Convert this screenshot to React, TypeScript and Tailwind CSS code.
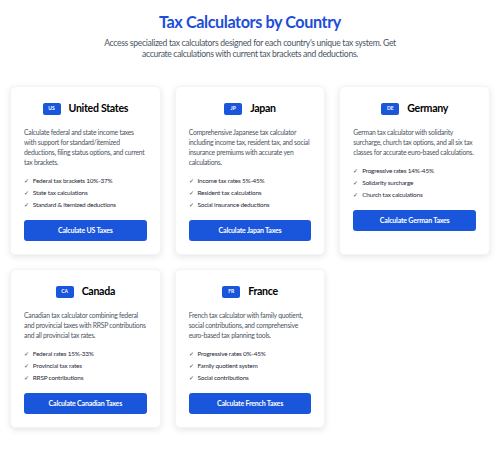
import { ReactNode } from "react";

// Country card data
interface Country {
    code: string;
    name: string;
    description: string;
    features: string[];
    button: string;
}

const countries: Country[] = [
    {
        code: "US",
        name: "United States",
        description:
            "Calculate federal and state income taxes with support for standard/itemized deductions, filing status options, and current tax brackets.",
        features: ["Federal tax brackets 10%-37%", "State tax calculations", "Standard & itemized deductions"],
        button: "Calculate US Taxes",
    },
    {
        code: "JP",
        name: "Japan",
        description:
            "Comprehensive Japanese tax calculator including income tax, resident tax, and social insurance premiums with accurate yen calculations.",
        features: ["Income tax rates 5%-45%", "Resident tax calculations", "Social insurance deductions"],
        button: "Calculate Japan Taxes",
    },
    {
        code: "DE",
        name: "Germany",
        description:
            "German tax calculator with solidarity surcharge, church tax options, and all six tax classes for accurate euro-based calculations.",
        features: ["Progressive rates 14%-45%", "Solidarity surcharge", "Church tax calculations"],
        button: "Calculate German Taxes",
    },
    {
        code: "CA",
        name: "Canada",
        description:
            "Canadian tax calculator combining federal and provincial taxes with RRSP contributions and all provincial tax rates.",
        features: ["Federal rates 15%-33%", "Provincial tax rates", "RRSP contributions"],
        button: "Calculate Canadian Taxes",
    },
    {
        code: "FR",
        name: "France",
        description:
            "French tax calculator with family quotient, social contributions, and comprehensive euro-based tax planning tools.",
        features: ["Progressive rates 0%-45%", "Family quotient system", "Social contributions"],
        button: "Calculate French Taxes",
    },
];

const CountryCard = ({ country }: { country: Country }) => (
    <div className="flex flex-col rounded-[5px] border border-gray-100 bg-white px-[13px] pt-[14px] pb-[13px] shadow-[0_2px_6px_rgba(0,0,0,0.1)]">
        <div className="flex h-[16px] items-center justify-center gap-[8px]">
            <span className="flex h-[12px] w-[18px] items-center justify-center rounded-[2px] bg-[#1a56db] text-[5px] font-bold text-white">
                {country.code}
            </span>
            <h2 className="text-[10.6px] font-bold tracking-[-0.3px] text-black">{country.name}</h2>
        </div>
        <p className="mt-[10px] text-[6.8px] leading-[10px] tracking-[-0.25px] text-[#4b5563]">
            {country.description}
        </p>
        <ul className="mt-[8px] flex flex-col">
            {country.features.map((f) => (
                <li
                    key={f}
                    className="flex h-[12px] items-center gap-[4px] text-[6.4px] tracking-[-0.2px] text-[#1f2937]"
                >
                    <span className="text-[#374151]">✓</span>
                    {f}
                </li>
            ))}
        </ul>
        <button className="mt-[9px] h-[21px] w-full rounded-[3px] bg-[#1a56db] text-[7px] font-bold tracking-[-0.2px] text-white">
            {country.button}
        </button>
    </div>
);

const Page = ({ children }: { children: ReactNode }) => (
    <div className="min-h-screen bg-white font-['Lato',sans-serif]">{children}</div>
);

export default function App() {
    return (
        <Page>
            <div className="px-[10px] pt-[12px] pb-[20px]">
                <h1 className="text-center text-[16.2px] font-bold leading-[20px] tracking-[-0.4px] text-[#1d4ed8]">
                    Tax Calculators by Country
                </h1>
                <p className="mx-auto mt-[6px] w-[302px] text-center text-[8.6px] leading-[11px] tracking-[-0.32px] text-[#4b5563]">
                    Access specialized tax calculators designed for each country's unique tax system. Get accurate
                    calculations with current tax brackets and deductions.
                </p>
                <div className="mt-[26px] grid grid-cols-3 gap-[14px]">
                    {countries.map((c) => (
                        <CountryCard key={c.code} country={c} />
                    ))}
                </div>
            </div>
        </Page>
    );
}
